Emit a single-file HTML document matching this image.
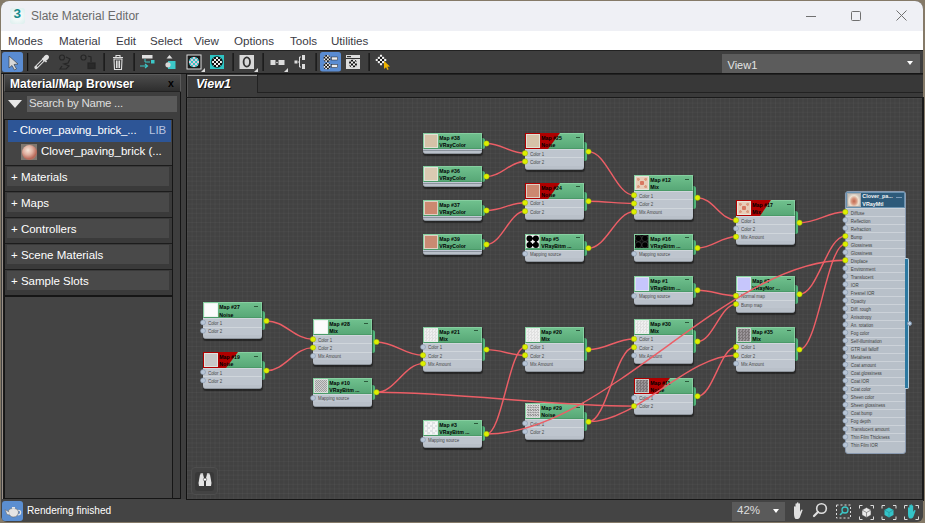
<!DOCTYPE html><html><head><meta charset="utf-8"><style>
*{margin:0;padding:0;box-sizing:border-box}
html,body{width:925px;height:523px;overflow:hidden;background:#857a68;font-family:"Liberation Sans", sans-serif}
.abs{position:absolute}
#win{position:absolute;left:1px;top:1px;width:922px;height:521px;background:#444;border-radius:8px 8px 6px 6px}
#title{position:absolute;left:1px;top:1px;width:922px;height:30px;background:#eff0f5;border-radius:8px 8px 0 0}
#menu{position:absolute;left:1px;top:31px;width:922px;height:19px;background:#fff}
#menu span{position:absolute;top:3.3px;font-size:11.6px;color:#3a3a44}
#tb{position:absolute;left:1px;top:50px;width:922px;height:24px;background:#3e3e3e}
.node{position:absolute}
.node > *{position:absolute}
.nb{left:0;top:0;background:#b9c0c9;border-bottom:0.8px solid #8f969e;border-radius:0 0 3px 3px;box-shadow:0.5px 1.2px 1px rgba(0,0,0,.45)}
.hd{left:0;top:0;height:16px;background:linear-gradient(#6fc08d,#58a877);border:1px solid #86cfa0;border-bottom:1px solid #4a9a68}
.otab{width:4.2px;background:#52b87c;border-radius:0 2.5px 2.5px 0}
.sw{left:1px;top:1px;width:14px;height:14px;border:0.6px solid rgba(230,240,232,.7)}
.t1,.t2{left:16.3px;font-size:5.2px;font-weight:bold;color:#000;white-space:nowrap;line-height:6px}
.t1{top:2.2px} .t2{top:9.3px}
.mini{right:4px;top:3.5px;width:4px;height:1px;background:#2c5a3c}
.row{left:0;height:8.3px;background:#bec5ce;border-top:0.8px solid #d0d6dc}
.row span{position:absolute;left:5px;top:0.6px;font-size:5.1px;color:#484848;white-space:nowrap;line-height:6px;transform:scaleX(0.86);transform-origin:0 0}
</style></head><body>
<div id="win"></div>
<div id="title">
<div class="abs" style="left:9px;top:7px;width:15px;height:16px;background:radial-gradient(circle at 50% 50%,#f2f8f8 40%,#d8eeec 100%);border-radius:3px"></div>
<div class="abs" style="left:12.5px;top:5px;font-size:13.5px;font-weight:bold;color:#168c8c">3</div>
<div class="abs" style="left:30px;top:8px;font-size:12px;color:#6a6a6a">Slate Material Editor</div>
<div class="abs" style="left:805px;top:15px;width:10px;height:1px;background:#707070"></div>
<div class="abs" style="left:850px;top:10px;width:10px;height:10px;border:1px solid #707070;border-radius:1.5px"></div>
<svg class="abs" style="left:895px;top:9px" width="11" height="11"><path d="M0.5,0.5 L10.5,10.5 M10.5,0.5 L0.5,10.5" stroke="#707070" stroke-width="1"/></svg>
</div>
<div id="menu">
<span style="left:7px">Modes</span>
<span style="left:58px">Material</span>
<span style="left:115px">Edit</span>
<span style="left:149px">Select</span>
<span style="left:193px">View</span>
<span style="left:233px">Options</span>
<span style="left:289px">Tools</span>
<span style="left:330px">Utilities</span>
</div>
<div id="tb"></div>
<svg class="abs" style="left:0;top:0" width="925" height="80"><rect x="1" y="50" width="922" height="1" fill="#222"/><rect x="2" y="52" width="21" height="20" rx="2.5" fill="#5a8cd2"/><path d="M9,56 L9,68 L12,65.5 L14.5,70 L16.5,69 L14,64.5 L18,64 Z" fill="#d8d8d8" stroke="#333" stroke-width="0.6"/><rect x="27" y="53" width="1.2" height="18" fill="#111"/><rect x="103.5" y="53" width="1.2" height="18" fill="#111"/><rect x="133.5" y="53" width="1.2" height="18" fill="#111"/><rect x="232.5" y="53" width="1.2" height="18" fill="#111"/><rect x="262.5" y="53" width="1.2" height="18" fill="#111"/><rect x="315.5" y="53" width="1.2" height="18" fill="#111"/><rect x="368.5" y="53" width="1.2" height="18" fill="#111"/><path d="M36,67.5 L43.5,60" stroke="#dcdcdc" stroke-width="3.2" stroke-linecap="round"/><path d="M37,66.5 L43,60.5" stroke="#3a3a3a" stroke-width="1.1"/><ellipse cx="46" cy="57.8" rx="3.3" ry="2.4" transform="rotate(-45 46 57.8)" fill="#e0e0e0"/><path d="M42.5,58 L46.5,62" stroke="#e0e0e0" stroke-width="1.6"/><g fill="none" stroke="#262626" stroke-width="1.2"><circle cx="62" cy="57.5" r="2.5"/><path d="M66,57 L70,59 L68,63 L64,64 L69,66 L66,69 L60,69 L62,66"/></g><g fill="none" stroke="#262626" stroke-width="1.2"><circle cx="83.5" cy="57.5" r="2.5"/><path d="M88,56 L91,57 L91,62"/><rect x="88" y="63" width="7" height="5.5" fill="#2a2a2a"/></g><g fill="none" stroke="#e0e0e0" stroke-width="1.1"><path d="M113,57.5 L123,57.5 M116,57.5 L116,55.5 L120,55.5 L120,57.5"/><path d="M114,59 L114.5,69.5 L121.5,69.5 L122,59 Z M116.5,60.5 L116.5,68 M118,60.5 L118,68 M119.5,60.5 L119.5,68"/></g><rect x="142" y="55" width="10.5" height="3.5" fill="#e0e0e0"/><path d="M145,59 L145,62 L150,62" stroke="#3cc8c8" stroke-width="1" fill="none"/><rect x="151" y="60" width="3.5" height="3.5" fill="#3cc8c8"/><path d="M140,66 L147,66 M145,64 L147.5,66 L145,68" stroke="#3cc8c8" stroke-width="1.2" fill="none"/><polygon points="169.5,55 172.5,58.5 166.5,58.5" fill="#e0e0e0"/><rect x="168" y="61" width="7.5" height="8" fill="#3cc8c8"/><circle cx="168" cy="64.8" r="2.6" fill="#d8d8d8"/><rect x="187" y="55" width="14" height="14" fill="#1a1a1a" stroke="#ddd" stroke-width="1"/><clipPath id="ck1"><circle cx="194" cy="62" r="5.2"/></clipPath><g clip-path="url(#ck1)"><rect x="188.8" y="56.8" width="10.4" height="10.4" fill="#2ec4c4"/><rect x="188.80" y="56.80" width="2.08" height="2.08" fill="#e8c8d8"/><rect x="188.80" y="60.96" width="2.08" height="2.08" fill="#e8c8d8"/><rect x="188.80" y="65.12" width="2.08" height="2.08" fill="#e8c8d8"/><rect x="190.88" y="58.88" width="2.08" height="2.08" fill="#e8c8d8"/><rect x="190.88" y="63.04" width="2.08" height="2.08" fill="#e8c8d8"/><rect x="192.96" y="56.80" width="2.08" height="2.08" fill="#e8c8d8"/><rect x="192.96" y="60.96" width="2.08" height="2.08" fill="#e8c8d8"/><rect x="192.96" y="65.12" width="2.08" height="2.08" fill="#e8c8d8"/><rect x="195.04" y="58.88" width="2.08" height="2.08" fill="#e8c8d8"/><rect x="195.04" y="63.04" width="2.08" height="2.08" fill="#e8c8d8"/><rect x="197.12" y="56.80" width="2.08" height="2.08" fill="#e8c8d8"/><rect x="197.12" y="60.96" width="2.08" height="2.08" fill="#e8c8d8"/><rect x="197.12" y="65.12" width="2.08" height="2.08" fill="#e8c8d8"/></g><polygon points="205,68 205,72 201,72" fill="#ddd"/><rect x="210" y="55" width="14" height="14" fill="#2ec4c4"/><circle cx="217" cy="62" r="5.8" fill="#111"/><clipPath id="ck2"><circle cx="217" cy="62" r="5"/></clipPath><g clip-path="url(#ck2)"><rect x="212" y="57" width="10" height="10" fill="#111"/><rect x="212.00" y="57.00" width="2.00" height="2.00" fill="#f0f0f0"/><rect x="212.00" y="61.00" width="2.00" height="2.00" fill="#f0f0f0"/><rect x="212.00" y="65.00" width="2.00" height="2.00" fill="#f0f0f0"/><rect x="214.00" y="59.00" width="2.00" height="2.00" fill="#f0f0f0"/><rect x="214.00" y="63.00" width="2.00" height="2.00" fill="#f0f0f0"/><rect x="216.00" y="57.00" width="2.00" height="2.00" fill="#f0f0f0"/><rect x="216.00" y="61.00" width="2.00" height="2.00" fill="#f0f0f0"/><rect x="216.00" y="65.00" width="2.00" height="2.00" fill="#f0f0f0"/><rect x="218.00" y="59.00" width="2.00" height="2.00" fill="#f0f0f0"/><rect x="218.00" y="63.00" width="2.00" height="2.00" fill="#f0f0f0"/><rect x="220.00" y="57.00" width="2.00" height="2.00" fill="#f0f0f0"/><rect x="220.00" y="61.00" width="2.00" height="2.00" fill="#f0f0f0"/><rect x="220.00" y="65.00" width="2.00" height="2.00" fill="#f0f0f0"/></g><rect x="239.5" y="55" width="14.5" height="14" fill="#d8d8d8"/><ellipse cx="246.8" cy="62" rx="3.2" ry="4.6" fill="none" stroke="#333" stroke-width="1.8"/><polygon points="258,68 258,72 254,72" fill="#ddd"/><rect x="270.5" y="60" width="5" height="5" fill="#ddd"/><rect x="278.5" y="60" width="6" height="5" fill="#ddd"/><circle cx="277" cy="62.5" r="0.8" fill="#ddd"/><polygon points="288,68 288,72 284,72" fill="#ddd"/><rect x="294.5" y="60.5" width="3" height="3" fill="#ddd"/><path d="M301,57 L299.5,57 L299.5,67 L301,67 M298,62 L299.5,62" stroke="#ddd" stroke-width="1" fill="none"/><rect x="302" y="55" width="3" height="5" fill="#ddd"/><rect x="302" y="64" width="3" height="5" fill="#ddd"/><rect x="320" y="52" width="21" height="19.5" rx="2.5" fill="#5a8cd2"/><clipPath id="ck3"><circle cx="327" cy="58.5" r="3.6"/></clipPath><g clip-path="url(#ck3)"><rect x="323.4" y="54.9" width="7.2" height="7.2" fill="#111"/><rect x="323.40" y="54.90" width="1.80" height="1.80" fill="#f0f0f0"/><rect x="323.40" y="58.50" width="1.80" height="1.80" fill="#f0f0f0"/><rect x="325.20" y="56.70" width="1.80" height="1.80" fill="#f0f0f0"/><rect x="325.20" y="60.30" width="1.80" height="1.80" fill="#f0f0f0"/><rect x="327.00" y="54.90" width="1.80" height="1.80" fill="#f0f0f0"/><rect x="327.00" y="58.50" width="1.80" height="1.80" fill="#f0f0f0"/><rect x="328.80" y="56.70" width="1.80" height="1.80" fill="#f0f0f0"/><rect x="328.80" y="60.30" width="1.80" height="1.80" fill="#f0f0f0"/></g><clipPath id="ck4"><circle cx="327" cy="66" r="3.6"/></clipPath><g clip-path="url(#ck4)"><rect x="323.4" y="62.4" width="7.2" height="7.2" fill="#111"/><rect x="323.40" y="62.40" width="1.80" height="1.80" fill="#f0f0f0"/><rect x="323.40" y="66.00" width="1.80" height="1.80" fill="#f0f0f0"/><rect x="325.20" y="64.20" width="1.80" height="1.80" fill="#f0f0f0"/><rect x="325.20" y="67.80" width="1.80" height="1.80" fill="#f0f0f0"/><rect x="327.00" y="62.40" width="1.80" height="1.80" fill="#f0f0f0"/><rect x="327.00" y="66.00" width="1.80" height="1.80" fill="#f0f0f0"/><rect x="328.80" y="64.20" width="1.80" height="1.80" fill="#f0f0f0"/><rect x="328.80" y="67.80" width="1.80" height="1.80" fill="#f0f0f0"/></g><rect x="331.5" y="57" width="6" height="3" fill="#eee" stroke="#222" stroke-width="0.5"/><rect x="331.5" y="64.5" width="6" height="3" fill="#eee" stroke="#222" stroke-width="0.5"/><rect x="346" y="55" width="14" height="14" fill="#ddd"/><rect x="346" y="58" width="14" height="1" fill="#333"/><rect x="347" y="56" width="4" height="1.2" fill="#333"/><clipPath id="ck5"><circle cx="353" cy="63.5" r="4"/></clipPath><g clip-path="url(#ck5)"><rect x="349" y="59.5" width="8" height="8" fill="#111"/><rect x="349.00" y="59.50" width="2.00" height="2.00" fill="#eee"/><rect x="349.00" y="63.50" width="2.00" height="2.00" fill="#eee"/><rect x="351.00" y="61.50" width="2.00" height="2.00" fill="#eee"/><rect x="351.00" y="65.50" width="2.00" height="2.00" fill="#eee"/><rect x="353.00" y="59.50" width="2.00" height="2.00" fill="#eee"/><rect x="353.00" y="63.50" width="2.00" height="2.00" fill="#eee"/><rect x="355.00" y="61.50" width="2.00" height="2.00" fill="#eee"/><rect x="355.00" y="65.50" width="2.00" height="2.00" fill="#eee"/></g><rect x="379.95" y="54.75" width="2.1" height="2.1" fill="#f4f4f4"/><rect x="377.85" y="56.85" width="2.1" height="2.1" fill="#f4f4f4"/><rect x="379.95" y="56.85" width="2.1" height="2.1" fill="#111"/><rect x="382.05" y="56.85" width="2.1" height="2.1" fill="#f4f4f4"/><rect x="375.75" y="58.95" width="2.1" height="2.1" fill="#f4f4f4"/><rect x="377.85" y="58.95" width="2.1" height="2.1" fill="#111"/><rect x="379.95" y="58.95" width="2.1" height="2.1" fill="#f4f4f4"/><rect x="382.05" y="58.95" width="2.1" height="2.1" fill="#111"/><rect x="384.15" y="58.95" width="2.1" height="2.1" fill="#f4f4f4"/><rect x="377.85" y="61.05" width="2.1" height="2.1" fill="#f4f4f4"/><rect x="379.95" y="61.05" width="2.1" height="2.1" fill="#111"/><rect x="382.05" y="61.05" width="2.1" height="2.1" fill="#f4f4f4"/><rect x="379.95" y="63.15" width="2.1" height="2.1" fill="#f4f4f4"/><path d="M384,61 L384,69 L386,67.3 L387.5,70 L388.7,69.3 L387.3,66.7 L390,66.5 Z" fill="#f0b400"/></svg>
<div class="abs" style="left:2px;top:73px;width:1px;height:426px;background:#9a9088"></div>
<div class="abs" style="left:3px;top:73px;width:178px;height:426px;background:#3e3e3e;border-left:1.5px solid #1a1a1a;border-bottom:1.5px solid #111"></div>
<div class="abs" style="left:180.3px;top:73px;width:5.5px;height:426px;background:#3e3e3e;border-left:1.2px solid #151515"></div>
<div class="abs" style="left:4px;top:74px;width:177px;height:18px;background:linear-gradient(#4c4c4c,#2e2e2e);border:1px solid #5a5a5a;border-bottom:1px solid #222"></div>
<div class="abs" style="left:10px;top:76.7px;font-size:12px;font-weight:bold;color:#fff;text-shadow:0.5px 0.5px 0 #111">Material/Map Browser</div>
<div class="abs" style="left:168px;top:77px;font-size:10.5px;font-weight:bold;color:#000">x</div>
<div class="abs" style="left:27px;top:96px;width:150px;height:16px;background:#5a5a5a"></div>
<div class="abs" style="left:29px;top:97px;font-size:11.5px;color:#dedede;letter-spacing:-0.25px">Search by Name ...</div>
<svg class="abs" style="left:8px;top:99.5px" width="14" height="9"><polygon points="0,0 14,0 7,8" fill="#e8e8e8"/></svg>
<div class="abs" style="left:4px;top:118.5px;width:169px;height:380px;background:#444;border:1.5px solid #161616"></div>
<div class="abs" style="left:8px;top:120px;width:163px;height:22px;background:#2d5596"></div>
<div class="abs" style="left:13px;top:124px;font-size:11.5px;color:#fff;white-space:pre;letter-spacing:-0.15px">- Clover_paving_brick_...</div>
<div class="abs" style="left:149px;top:124px;font-size:11.5px;color:#b8c4e0">LIB</div>
<div class="abs" style="left:21px;top:144px;width:16px;height:16px;background:#807870"></div>
<div class="abs" style="left:21.5px;top:144.5px;width:15px;height:15px;border-radius:50%;background:radial-gradient(circle at 40% 35%,#f6e6d8 0%,#e0b0a0 35%,#b86858 65%,#9a8a80 100%)"></div>
<div class="abs" style="left:41px;top:145px;font-size:11.5px;color:#fff">Clover_paving_brick (...</div>
<div class="abs" style="left:5px;top:165px;width:167px;height:26px;background:#3a3a3a;border-top:1.5px solid #1c1c1c"></div>
<div class="abs" style="left:7px;top:167px;width:162px;height:19px;background:#494949"></div>
<div class="abs" style="left:11px;top:170.5px;font-size:11.5px;color:#fff">+ Materials</div>
<div class="abs" style="left:5px;top:191px;width:167px;height:26px;background:#3a3a3a;border-top:1.5px solid #1c1c1c"></div>
<div class="abs" style="left:7px;top:193px;width:162px;height:19px;background:#494949"></div>
<div class="abs" style="left:11px;top:196.5px;font-size:11.5px;color:#fff">+ Maps</div>
<div class="abs" style="left:5px;top:217px;width:167px;height:26px;background:#3a3a3a;border-top:1.5px solid #1c1c1c"></div>
<div class="abs" style="left:7px;top:219px;width:162px;height:19px;background:#494949"></div>
<div class="abs" style="left:11px;top:222.5px;font-size:11.5px;color:#fff">+ Controllers</div>
<div class="abs" style="left:5px;top:243px;width:167px;height:26px;background:#3a3a3a;border-top:1.5px solid #1c1c1c"></div>
<div class="abs" style="left:7px;top:245px;width:162px;height:19px;background:#494949"></div>
<div class="abs" style="left:11px;top:248.5px;font-size:11.5px;color:#fff">+ Scene Materials</div>
<div class="abs" style="left:5px;top:269px;width:167px;height:26px;background:#3a3a3a;border-top:1.5px solid #1c1c1c"></div>
<div class="abs" style="left:7px;top:271px;width:162px;height:19px;background:#494949"></div>
<div class="abs" style="left:11px;top:274.5px;font-size:11.5px;color:#fff">+ Sample Slots</div>
<div class="abs" style="left:5px;top:295px;width:167px;height:1.5px;background:#161616"></div>
<div class="abs" style="left:185.5px;top:73px;width:737.5px;height:426px;background:#3a3a3a;border-left:1.2px solid #111"></div>
<div class="abs" style="left:1px;top:72.5px;width:922px;height:1.5px;background:#151515"></div>
<div class="abs" style="left:257px;top:74px;width:666px;height:19px;background:#383838;border:1.5px solid #222;border-right:none"></div>
<div class="abs" style="left:187px;top:75px;width:70px;height:22px;background:#3c3c3c;border-top:1px solid #9a9a9a;border-left:1px solid #555"></div>
<div class="abs" style="left:196px;top:77px;font-size:12.5px;font-weight:bold;font-style:italic;color:#fff;text-shadow:1px 1px 0 #111">View1</div>
<div class="abs" style="left:186px;top:96.5px;width:737px;height:1.5px;background:#1a1a1a"></div>
<div class="abs" style="left:186.7px;top:98px;width:735.3px;height:400.5px;background-color:#424242;background-image:linear-gradient(90deg,rgba(255,255,255,.03) 1px,transparent 1px),linear-gradient(rgba(255,255,255,.03) 1px,transparent 1px);background-size:4.6px 4.6px"></div>
<div class="abs" style="left:922px;top:96.5px;width:1.5px;height:404px;background:#1a1a1a"></div>
<div class="abs" style="left:186px;top:498.5px;width:737px;height:1.5px;background:#151515"></div>
<div class="node" style="left:423px;top:133px;width:59px;height:21.0px"><div class="otab" style="left:58px;top:5.0px;height:11.0px"></div><div class="nb" style="width:59px;height:21.0px"></div><div class="hd" style="width:59px"></div><div class="sw" style="background:#d6c2a8"></div><div class="t1">Map #38</div><div class="t2">VRayColor</div><div style="left:0;top:16px;width:59px;height:2.4px;background:#c3c8d6;border-bottom:0.6px solid #8a929c"></div></div>
<div class="node" style="left:423px;top:166px;width:59px;height:21.0px"><div class="otab" style="left:58px;top:5.0px;height:11.0px"></div><div class="nb" style="width:59px;height:21.0px"></div><div class="hd" style="width:59px"></div><div class="sw" style="background:#dacab2"></div><div class="t1">Map #36</div><div class="t2">VRayColor</div><div style="left:0;top:16px;width:59px;height:2.4px;background:#c3c8d6;border-bottom:0.6px solid #8a929c"></div></div>
<div class="node" style="left:423px;top:200px;width:59px;height:21.0px"><div class="otab" style="left:58px;top:5.0px;height:11.0px"></div><div class="nb" style="width:59px;height:21.0px"></div><div class="hd" style="width:59px"></div><div class="sw" style="background:#cc8870"></div><div class="t1">Map #37</div><div class="t2">VRayColor</div><div style="left:0;top:16px;width:59px;height:2.4px;background:#c3c8d6;border-bottom:0.6px solid #8a929c"></div></div>
<div class="node" style="left:423px;top:234px;width:59px;height:21.0px"><div class="otab" style="left:58px;top:5.0px;height:11.0px"></div><div class="nb" style="width:59px;height:21.0px"></div><div class="hd" style="width:59px"></div><div class="sw" style="background:#c98a72"></div><div class="t1">Map #39</div><div class="t2">VRayColor</div><div style="left:0;top:16px;width:59px;height:2.4px;background:#c3c8d6;border-bottom:0.6px solid #8a929c"></div></div>
<div class="node" style="left:525px;top:133px;width:59px;height:37.1px"><div class="otab" style="left:58px;top:9.1px;height:19.0px"></div><div class="nb" style="width:59px;height:37.1px"></div><div class="hd" style="width:59px"></div><svg class="red" width="59" height="16" style="left:0;top:0"><polygon points="0,0 35,0 23,16 0,16" fill="#b00000"/></svg><div class="sw" style="background:#d6c2a8"></div><div class="t1">Map #25</div><div class="t2">Noise</div><div class="mini"></div><div class="row" style="top:16.0px;width:59px"><span>Color 1</span></div><div class="row" style="top:24.3px;width:59px"><span>Color 2</span></div></div>
<div class="node" style="left:525px;top:182.7px;width:59px;height:37.1px"><div class="otab" style="left:58px;top:9.1px;height:19.0px"></div><div class="nb" style="width:59px;height:37.1px"></div><div class="hd" style="width:59px"></div><svg class="red" width="59" height="16" style="left:0;top:0"><polygon points="0,0 35,0 23,16 0,16" fill="#b00000"/></svg><div class="sw" style="background:#cc8870"></div><div class="t1">Map #24</div><div class="t2">Noise</div><div class="mini"></div><div class="row" style="top:16.0px;width:59px"><span>Color 1</span></div><div class="row" style="top:24.3px;width:59px"><span>Color 2</span></div></div>
<div class="node" style="left:525px;top:233.7px;width:59px;height:28.8px"><div class="otab" style="left:58px;top:6.9px;height:15.0px"></div><div class="nb" style="width:59px;height:28.8px"></div><div class="hd" style="width:59px"></div><svg style="position:absolute;left:1.3px;top:1.3px" width="13.4" height="13.4"><rect width="13.4" height="13.4" fill="#f2f2f2"/><g fill="#000"><circle cx="3.5" cy="3.5" r="3.0"/><circle cx="9.9" cy="3.5" r="3.0"/><circle cx="3.5" cy="9.9" r="3.0"/><circle cx="9.9" cy="9.9" r="3.0"/><rect x="3.5" y="2.6" width="6.4" height="1.8"/><rect x="3.5" y="9" width="6.4" height="1.8"/><rect x="2.6" y="3.5" width="1.8" height="6.4"/><rect x="9" y="3.5" width="1.8" height="6.4"/></g></svg><div class="t1">Map #5</div><div class="t2">VRayBitm ...</div><div class="mini"></div><div class="row" style="top:16.0px;width:59px"><span>Mapping source</span></div></div>
<div class="node" style="left:634px;top:175px;width:59px;height:45.4px"><div class="otab" style="left:58px;top:11.2px;height:23.0px"></div><div class="nb" style="width:59px;height:45.4px"></div><div class="hd" style="width:59px"></div><div class="sw" style="background:#e8cdb8;background-image:radial-gradient(circle at 50% 50%,#d87860 0 2px,transparent 2.5px),radial-gradient(circle at 20% 20%,#dc9a80 0 1.2px,transparent 1.6px),radial-gradient(circle at 80% 20%,#dc9a80 0 1.2px,transparent 1.6px),radial-gradient(circle at 20% 80%,#dc9a80 0 1.2px,transparent 1.6px),radial-gradient(circle at 80% 80%,#dc9a80 0 1.2px,transparent 1.6px)"></div><div class="t1">Map #12</div><div class="t2">Mix</div><div class="mini"></div><div class="row" style="top:16.0px;width:59px"><span>Color 1</span></div><div class="row" style="top:24.3px;width:59px"><span>Color 2</span></div><div class="row" style="top:32.6px;width:59px"><span>Mix Amount</span></div></div>
<div class="node" style="left:634px;top:233.6px;width:59px;height:28.8px"><div class="otab" style="left:58px;top:6.9px;height:15.0px"></div><div class="nb" style="width:59px;height:28.8px"></div><div class="hd" style="width:59px"></div><svg style="position:absolute;left:1.3px;top:1.3px" width="13.4" height="13.4"><rect width="13.4" height="13.4" fill="#0c0c0c"/><g fill="#000" stroke="#555" stroke-width="0.5"><circle cx="3.4" cy="3.4" r="3.1"/><circle cx="10" cy="3.4" r="3.1"/><circle cx="3.4" cy="10" r="3.1"/><circle cx="10" cy="10" r="3.1"/></g></svg><div class="t1">Map #16</div><div class="t2">VRayBitm ...</div><div class="mini"></div><div class="row" style="top:16.0px;width:59px"><span>Mapping source</span></div></div>
<div class="node" style="left:634px;top:275.8px;width:59px;height:28.8px"><div class="otab" style="left:58px;top:6.9px;height:15.0px"></div><div class="nb" style="width:59px;height:28.8px"></div><div class="hd" style="width:59px"></div><div class="sw" style="background:#c6c6fc"></div><div class="t1">Map #1</div><div class="t2">VRayBitm ...</div><div class="mini"></div><div class="row" style="top:16.0px;width:59px"><span>Mapping source</span></div></div>
<div class="node" style="left:634px;top:318.8px;width:59px;height:45.4px"><div class="otab" style="left:58px;top:11.2px;height:23.0px"></div><div class="nb" style="width:59px;height:45.4px"></div><div class="hd" style="width:59px"></div><div class="sw" style="background:#e8e8e8;background-image:repeating-conic-gradient(#e0e0e0 0 25%,#f0f0f0 0 50%);background-size:3px 3px"></div><div class="t1">Map #30</div><div class="t2">Mix</div><div class="mini"></div><div class="row" style="top:16.0px;width:59px"><span>Color 1</span></div><div class="row" style="top:24.3px;width:59px"><span>Color 2</span></div><div class="row" style="top:32.6px;width:59px"><span>Mix Amount</span></div></div>
<div class="node" style="left:634px;top:377.6px;width:59px;height:37.1px"><div class="otab" style="left:58px;top:9.1px;height:19.0px"></div><div class="nb" style="width:59px;height:37.1px"></div><div class="hd" style="width:59px"></div><svg class="red" width="59" height="16" style="left:0;top:0"><polygon points="0,0 36,0 24,16 0,16" fill="#b00000"/></svg><div class="sw" style="background:#8a8488;background-image:repeating-conic-gradient(#7c7678 0 25%,#9a9498 0 50%);background-size:3px 3px"></div><div class="t1">Map #11</div><div class="t2">Noise</div><div class="mini"></div><div class="row" style="top:16.0px;width:59px"><span>Color 1</span></div><div class="row" style="top:24.3px;width:59px"><span>Color 2</span></div></div>
<div class="node" style="left:736px;top:200px;width:59px;height:45.4px"><div class="otab" style="left:58px;top:11.2px;height:23.0px"></div><div class="nb" style="width:59px;height:45.4px"></div><div class="hd" style="width:59px"></div><svg class="red" width="59" height="16" style="left:0;top:0"><polygon points="0,0 35,0 24,16 0,16" fill="#b00000"/></svg><div class="sw" style="background:#e8cdb8;background-image:radial-gradient(circle at 50% 50%,#d87860 0 2px,transparent 2.5px),radial-gradient(circle at 20% 20%,#dc9a80 0 1.2px,transparent 1.6px),radial-gradient(circle at 80% 20%,#dc9a80 0 1.2px,transparent 1.6px),radial-gradient(circle at 20% 80%,#dc9a80 0 1.2px,transparent 1.6px),radial-gradient(circle at 80% 80%,#dc9a80 0 1.2px,transparent 1.6px)"></div><div class="t1">Map #17</div><div class="t2">Mix</div><div class="mini"></div><div class="row" style="top:16.0px;width:59px"><span>Color 1</span></div><div class="row" style="top:24.3px;width:59px"><span>Color 2</span></div><div class="row" style="top:32.6px;width:59px"><span>Mix Amount</span></div></div>
<div class="node" style="left:736px;top:275.7px;width:59px;height:37.1px"><div class="otab" style="left:58px;top:9.1px;height:19.0px"></div><div class="nb" style="width:59px;height:37.1px"></div><div class="hd" style="width:59px"></div><div class="sw" style="background:#c6c6fc"></div><div class="t1">Map #7</div><div class="t2">VRayNor ...</div><div class="mini"></div><div class="row" style="top:16.0px;width:59px"><span>Normal map</span></div><div class="row" style="top:24.3px;width:59px"><span>Bump map</span></div></div>
<div class="node" style="left:736px;top:326.9px;width:59px;height:45.4px"><div class="otab" style="left:58px;top:11.2px;height:23.0px"></div><div class="nb" style="width:59px;height:45.4px"></div><div class="hd" style="width:59px"></div><div class="sw" style="background:#8a8488;background-image:repeating-conic-gradient(#7c7678 0 25%,#9a9498 0 50%);background-size:3px 3px"></div><div class="t1">Map #35</div><div class="t2">Mix</div><div class="mini"></div><div class="row" style="top:16.0px;width:59px"><span>Color 1</span></div><div class="row" style="top:24.3px;width:59px"><span>Color 2</span></div><div class="row" style="top:32.6px;width:59px"><span>Mix Amount</span></div></div>
<div class="node" style="left:203px;top:302.3px;width:59px;height:37.1px"><div class="otab" style="left:58px;top:9.1px;height:19.0px"></div><div class="nb" style="width:59px;height:37.1px"></div><div class="hd" style="width:59px"></div><div class="sw" style="background:#fbfbfb"></div><div class="t1">Map #27</div><div class="t2">Noise</div><div class="mini"></div><div class="row" style="top:16.0px;width:59px"><span>Color 1</span></div><div class="row" style="top:24.3px;width:59px"><span>Color 2</span></div></div>
<div class="node" style="left:203px;top:352px;width:59px;height:37.1px"><div class="otab" style="left:58px;top:9.1px;height:19.0px"></div><div class="nb" style="width:59px;height:37.1px"></div><div class="hd" style="width:59px"></div><svg class="red" width="59" height="16" style="left:0;top:0"><polygon points="0,0 35,0 23,16 0,16" fill="#b00000"/></svg><div class="sw" style="background:#c8c8c8"></div><div class="t1">Map #19</div><div class="t2">Noise</div><div class="mini"></div><div class="row" style="top:16.0px;width:59px"><span>Color 1</span></div><div class="row" style="top:24.3px;width:59px"><span>Color 2</span></div></div>
<div class="node" style="left:313px;top:319.2px;width:59px;height:45.4px"><div class="otab" style="left:58px;top:11.2px;height:23.0px"></div><div class="nb" style="width:59px;height:45.4px"></div><div class="hd" style="width:59px"></div><div class="sw" style="background:#fbfbfb"></div><div class="t1">Map #28</div><div class="t2">Mix</div><div class="mini"></div><div class="row" style="top:16.0px;width:59px"><span>Color 1</span></div><div class="row" style="top:24.3px;width:59px"><span>Color 2</span></div><div class="row" style="top:32.6px;width:59px"><span>Mix Amount</span></div></div>
<div class="node" style="left:313px;top:377.9px;width:59px;height:28.8px"><div class="otab" style="left:58px;top:6.9px;height:15.0px"></div><div class="nb" style="width:59px;height:28.8px"></div><div class="hd" style="width:59px"></div><div class="sw" style="background:#b8b8b8;background-image:repeating-conic-gradient(#a0a0a0 0 25%,#d0d0d0 0 50%);background-size:2px 2px"></div><div class="t1">Map #10</div><div class="t2">VRayBitm ...</div><div class="mini"></div><div class="row" style="top:16.0px;width:59px"><span>Mapping source</span></div></div>
<div class="node" style="left:423px;top:326.9px;width:59px;height:45.4px"><div class="otab" style="left:58px;top:11.2px;height:23.0px"></div><div class="nb" style="width:59px;height:45.4px"></div><div class="hd" style="width:59px"></div><div class="sw" style="background:#e8e8e8;background-image:repeating-conic-gradient(#e0e0e0 0 25%,#f0f0f0 0 50%);background-size:3px 3px"></div><div class="t1">Map #21</div><div class="t2">Mix</div><div class="mini"></div><div class="row" style="top:16.0px;width:59px"><span>Color 1</span></div><div class="row" style="top:24.3px;width:59px"><span>Color 2</span></div><div class="row" style="top:32.6px;width:59px"><span>Mix Amount</span></div></div>
<div class="node" style="left:423px;top:419.6px;width:59px;height:28.8px"><div class="otab" style="left:58px;top:6.9px;height:15.0px"></div><div class="nb" style="width:59px;height:28.8px"></div><div class="hd" style="width:59px"></div><div class="sw" style="background:#eef0f0;background-image:repeating-conic-gradient(#dfe2e4 0 25%,#f6f6f6 0 50%);background-size:5px 5px"></div><div class="t1">Map #3</div><div class="t2">VRayBitm ...</div><div class="mini"></div><div class="row" style="top:16.0px;width:59px"><span>Mapping source</span></div></div>
<div class="node" style="left:525px;top:326.9px;width:59px;height:45.4px"><div class="otab" style="left:58px;top:11.2px;height:23.0px"></div><div class="nb" style="width:59px;height:45.4px"></div><div class="hd" style="width:59px"></div><div class="sw" style="background:#e8e8e8;background-image:repeating-conic-gradient(#e0e0e0 0 25%,#f0f0f0 0 50%);background-size:3px 3px"></div><div class="t1">Map #20</div><div class="t2">Mix</div><div class="mini"></div><div class="row" style="top:16.0px;width:59px"><span>Color 1</span></div><div class="row" style="top:24.3px;width:59px"><span>Color 2</span></div><div class="row" style="top:32.6px;width:59px"><span>Mix Amount</span></div></div>
<div class="node" style="left:525px;top:403.2px;width:59px;height:37.1px"><div class="otab" style="left:58px;top:9.1px;height:19.0px"></div><div class="nb" style="width:59px;height:37.1px"></div><div class="hd" style="width:59px"></div><div class="sw" style="background:#b8b8b8;background-image:repeating-conic-gradient(#8a8a8a 0 25%,#dedede 0 50%);background-size:2.5px 2.5px"></div><div class="t1">Map #29</div><div class="t2">Noise</div><div class="mini"></div><div class="row" style="top:16.0px;width:59px"><span>Color 1</span></div><div class="row" style="top:24.3px;width:59px"><span>Color 2</span></div></div>
<div class="abs" style="left:845.3px;top:191.2px;width:60.700000000000045px;height:263px;background:#b8c0c9;border:1px solid #8a9ab0;border-radius:3px"></div>
<div class="abs" style="left:846.3px;top:192.2px;width:58.700000000000045px;height:16px;background:#2d5a7a;border:1px solid #6a92b0"></div>
<div class="abs" style="left:847.3px;top:193.2px;width:14px;height:14px;border:0.6px solid #aaa;background:radial-gradient(ellipse at 50% 60%,#c06850 0,#d89880 30%,#ece0d0 55%,#c8c0b8 80%)"></div>
<div class="abs" style="left:862.3px;top:193.2px;font-size:5.4px;font-weight:bold;color:#f4f4f4;line-height:6px;white-space:nowrap">Clover_pa...</div>
<div class="abs" style="left:862.3px;top:200.79999999999998px;font-size:5.4px;font-weight:bold;color:#f4f4f4;line-height:6px">VRayMtl</div>
<div class="abs" style="left:846.3px;top:208.0px;width:58.700000000000045px;height:8.03px;border-top:0.8px solid #ccd2d9"></div>
<div class="abs" style="left:850.3px;top:209.5px;font-size:5.1px;color:#404040;line-height:6px;white-space:nowrap;transform:scaleX(0.86);transform-origin:0 0;padding-left:1px">Diffuse</div>
<div class="abs" style="left:846.3px;top:216.0px;width:58.700000000000045px;height:8.03px;border-top:0.8px solid #ccd2d9"></div>
<div class="abs" style="left:850.3px;top:217.5px;font-size:5.1px;color:#404040;line-height:6px;white-space:nowrap;transform:scaleX(0.86);transform-origin:0 0;padding-left:1px">Reflection</div>
<div class="abs" style="left:846.3px;top:224.1px;width:58.700000000000045px;height:8.03px;border-top:0.8px solid #ccd2d9"></div>
<div class="abs" style="left:850.3px;top:225.6px;font-size:5.1px;color:#404040;line-height:6px;white-space:nowrap;transform:scaleX(0.86);transform-origin:0 0;padding-left:1px">Refraction</div>
<div class="abs" style="left:846.3px;top:232.1px;width:58.700000000000045px;height:8.03px;border-top:0.8px solid #ccd2d9"></div>
<div class="abs" style="left:850.3px;top:233.6px;font-size:5.1px;color:#404040;line-height:6px;white-space:nowrap;transform:scaleX(0.86);transform-origin:0 0;padding-left:1px">Bump</div>
<div class="abs" style="left:846.3px;top:240.1px;width:58.700000000000045px;height:8.03px;border-top:0.8px solid #ccd2d9"></div>
<div class="abs" style="left:850.3px;top:241.6px;font-size:5.1px;color:#404040;line-height:6px;white-space:nowrap;transform:scaleX(0.86);transform-origin:0 0;padding-left:1px">Glossiness</div>
<div class="abs" style="left:846.3px;top:248.2px;width:58.700000000000045px;height:8.03px;border-top:0.8px solid #ccd2d9"></div>
<div class="abs" style="left:850.3px;top:249.7px;font-size:5.1px;color:#404040;line-height:6px;white-space:nowrap;transform:scaleX(0.86);transform-origin:0 0;padding-left:1px">Glossiness</div>
<div class="abs" style="left:846.3px;top:256.2px;width:58.700000000000045px;height:8.03px;border-top:0.8px solid #ccd2d9"></div>
<div class="abs" style="left:850.3px;top:257.7px;font-size:5.1px;color:#404040;line-height:6px;white-space:nowrap;transform:scaleX(0.86);transform-origin:0 0;padding-left:1px">Displace</div>
<div class="abs" style="left:846.3px;top:264.2px;width:58.700000000000045px;height:8.03px;border-top:0.8px solid #ccd2d9"></div>
<div class="abs" style="left:850.3px;top:265.7px;font-size:5.1px;color:#404040;line-height:6px;white-space:nowrap;transform:scaleX(0.86);transform-origin:0 0;padding-left:1px">Environment</div>
<div class="abs" style="left:846.3px;top:272.2px;width:58.700000000000045px;height:8.03px;border-top:0.8px solid #ccd2d9"></div>
<div class="abs" style="left:850.3px;top:273.7px;font-size:5.1px;color:#404040;line-height:6px;white-space:nowrap;transform:scaleX(0.86);transform-origin:0 0;padding-left:1px">Translucent</div>
<div class="abs" style="left:846.3px;top:280.3px;width:58.700000000000045px;height:8.03px;border-top:0.8px solid #ccd2d9"></div>
<div class="abs" style="left:850.3px;top:281.8px;font-size:5.1px;color:#404040;line-height:6px;white-space:nowrap;transform:scaleX(0.86);transform-origin:0 0;padding-left:1px">IOR</div>
<div class="abs" style="left:846.3px;top:288.3px;width:58.700000000000045px;height:8.03px;border-top:0.8px solid #ccd2d9"></div>
<div class="abs" style="left:850.3px;top:289.8px;font-size:5.1px;color:#404040;line-height:6px;white-space:nowrap;transform:scaleX(0.86);transform-origin:0 0;padding-left:1px">Fresnel IOR</div>
<div class="abs" style="left:846.3px;top:296.3px;width:58.700000000000045px;height:8.03px;border-top:0.8px solid #ccd2d9"></div>
<div class="abs" style="left:850.3px;top:297.8px;font-size:5.1px;color:#404040;line-height:6px;white-space:nowrap;transform:scaleX(0.86);transform-origin:0 0;padding-left:1px">Opacity</div>
<div class="abs" style="left:846.3px;top:304.4px;width:58.700000000000045px;height:8.03px;border-top:0.8px solid #ccd2d9"></div>
<div class="abs" style="left:850.3px;top:305.9px;font-size:5.1px;color:#404040;line-height:6px;white-space:nowrap;transform:scaleX(0.86);transform-origin:0 0;padding-left:1px">Diff. rough</div>
<div class="abs" style="left:846.3px;top:312.4px;width:58.700000000000045px;height:8.03px;border-top:0.8px solid #ccd2d9"></div>
<div class="abs" style="left:850.3px;top:313.9px;font-size:5.1px;color:#404040;line-height:6px;white-space:nowrap;transform:scaleX(0.86);transform-origin:0 0;padding-left:1px">Anisotropy</div>
<div class="abs" style="left:846.3px;top:320.4px;width:58.700000000000045px;height:8.03px;border-top:0.8px solid #ccd2d9"></div>
<div class="abs" style="left:850.3px;top:321.9px;font-size:5.1px;color:#404040;line-height:6px;white-space:nowrap;transform:scaleX(0.86);transform-origin:0 0;padding-left:1px">An. rotation</div>
<div class="abs" style="left:846.3px;top:328.4px;width:58.700000000000045px;height:8.03px;border-top:0.8px solid #ccd2d9"></div>
<div class="abs" style="left:850.3px;top:329.9px;font-size:5.1px;color:#404040;line-height:6px;white-space:nowrap;transform:scaleX(0.86);transform-origin:0 0;padding-left:1px">Fog color</div>
<div class="abs" style="left:846.3px;top:336.5px;width:58.700000000000045px;height:8.03px;border-top:0.8px solid #ccd2d9"></div>
<div class="abs" style="left:850.3px;top:338.0px;font-size:5.1px;color:#404040;line-height:6px;white-space:nowrap;transform:scaleX(0.86);transform-origin:0 0;padding-left:1px">Self-illumination</div>
<div class="abs" style="left:846.3px;top:344.5px;width:58.700000000000045px;height:8.03px;border-top:0.8px solid #ccd2d9"></div>
<div class="abs" style="left:850.3px;top:346.0px;font-size:5.1px;color:#404040;line-height:6px;white-space:nowrap;transform:scaleX(0.86);transform-origin:0 0;padding-left:1px">GTR tail falloff</div>
<div class="abs" style="left:846.3px;top:352.5px;width:58.700000000000045px;height:8.03px;border-top:0.8px solid #ccd2d9"></div>
<div class="abs" style="left:850.3px;top:354.0px;font-size:5.1px;color:#404040;line-height:6px;white-space:nowrap;transform:scaleX(0.86);transform-origin:0 0;padding-left:1px">Metalness</div>
<div class="abs" style="left:846.3px;top:360.6px;width:58.700000000000045px;height:8.03px;border-top:0.8px solid #ccd2d9"></div>
<div class="abs" style="left:850.3px;top:362.1px;font-size:5.1px;color:#404040;line-height:6px;white-space:nowrap;transform:scaleX(0.86);transform-origin:0 0;padding-left:1px">Coat amount</div>
<div class="abs" style="left:846.3px;top:368.6px;width:58.700000000000045px;height:8.03px;border-top:0.8px solid #ccd2d9"></div>
<div class="abs" style="left:850.3px;top:370.1px;font-size:5.1px;color:#404040;line-height:6px;white-space:nowrap;transform:scaleX(0.86);transform-origin:0 0;padding-left:1px">Coat glossiness</div>
<div class="abs" style="left:846.3px;top:376.6px;width:58.700000000000045px;height:8.03px;border-top:0.8px solid #ccd2d9"></div>
<div class="abs" style="left:850.3px;top:378.1px;font-size:5.1px;color:#404040;line-height:6px;white-space:nowrap;transform:scaleX(0.86);transform-origin:0 0;padding-left:1px">Coat IOR</div>
<div class="abs" style="left:846.3px;top:384.7px;width:58.700000000000045px;height:8.03px;border-top:0.8px solid #ccd2d9"></div>
<div class="abs" style="left:850.3px;top:386.2px;font-size:5.1px;color:#404040;line-height:6px;white-space:nowrap;transform:scaleX(0.86);transform-origin:0 0;padding-left:1px">Coat color</div>
<div class="abs" style="left:846.3px;top:392.7px;width:58.700000000000045px;height:8.03px;border-top:0.8px solid #ccd2d9"></div>
<div class="abs" style="left:850.3px;top:394.2px;font-size:5.1px;color:#404040;line-height:6px;white-space:nowrap;transform:scaleX(0.86);transform-origin:0 0;padding-left:1px">Sheen color</div>
<div class="abs" style="left:846.3px;top:400.7px;width:58.700000000000045px;height:8.03px;border-top:0.8px solid #ccd2d9"></div>
<div class="abs" style="left:850.3px;top:402.2px;font-size:5.1px;color:#404040;line-height:6px;white-space:nowrap;transform:scaleX(0.86);transform-origin:0 0;padding-left:1px">Sheen glossiness</div>
<div class="abs" style="left:846.3px;top:408.8px;width:58.700000000000045px;height:8.03px;border-top:0.8px solid #ccd2d9"></div>
<div class="abs" style="left:850.3px;top:410.2px;font-size:5.1px;color:#404040;line-height:6px;white-space:nowrap;transform:scaleX(0.86);transform-origin:0 0;padding-left:1px">Coat bump</div>
<div class="abs" style="left:846.3px;top:416.8px;width:58.700000000000045px;height:8.03px;border-top:0.8px solid #ccd2d9"></div>
<div class="abs" style="left:850.3px;top:418.3px;font-size:5.1px;color:#404040;line-height:6px;white-space:nowrap;transform:scaleX(0.86);transform-origin:0 0;padding-left:1px">Fog depth</div>
<div class="abs" style="left:846.3px;top:424.8px;width:58.700000000000045px;height:8.03px;border-top:0.8px solid #ccd2d9"></div>
<div class="abs" style="left:850.3px;top:426.3px;font-size:5.1px;color:#404040;line-height:6px;white-space:nowrap;transform:scaleX(0.86);transform-origin:0 0;padding-left:1px">Translucent amount</div>
<div class="abs" style="left:846.3px;top:432.8px;width:58.700000000000045px;height:8.03px;border-top:0.8px solid #ccd2d9"></div>
<div class="abs" style="left:850.3px;top:434.3px;font-size:5.1px;color:#404040;line-height:6px;white-space:nowrap;transform:scaleX(0.86);transform-origin:0 0;padding-left:1px">Thin Film Thickness</div>
<div class="abs" style="left:846.3px;top:440.9px;width:58.700000000000045px;height:8.03px;border-top:0.8px solid #ccd2d9"></div>
<div class="abs" style="left:850.3px;top:442.4px;font-size:5.1px;color:#404040;line-height:6px;white-space:nowrap;transform:scaleX(0.86);transform-origin:0 0;padding-left:1px">Thin Film IOR</div>
<div class="abs" style="left:896px;top:196.5px;width:6px;height:1px;background:#7a9ab8"></div>
<div class="abs" style="left:905.3px;top:257.5px;width:4px;height:131.5px;background:#2c78a0;border:0.8px solid #b8d0e0;border-left:none;border-radius:0 2px 2px 0"></div>
<div class="abs" style="left:906.6px;top:320.5px;width:5.4px;height:5.4px;border-radius:50%;background:#c4d6e8;border:0.6px solid #7a90a8"></div>
<svg class="abs" style="left:0;top:0" width="925" height="523"><path d="M486.5,143.5 C501.9,143.5 509.6,153.2 525.0,153.2" fill="none" stroke="#ec5e66" stroke-width="1.45"/><path d="M486.5,176.5 C501.9,176.5 509.6,161.5 525.0,161.5" fill="none" stroke="#ec5e66" stroke-width="1.45"/><path d="M486.5,210.5 C501.9,210.5 509.6,202.8 525.0,202.8" fill="none" stroke="#ec5e66" stroke-width="1.45"/><path d="M486.5,244.5 C501.9,244.5 509.6,211.2 525.0,211.2" fill="none" stroke="#ec5e66" stroke-width="1.45"/><path d="M588.5,151.6 C606.7,151.6 615.8,195.2 634.0,195.2" fill="none" stroke="#ec5e66" stroke-width="1.45"/><path d="M588.5,201.2 C606.7,201.2 615.8,203.5 634.0,203.5" fill="none" stroke="#ec5e66" stroke-width="1.45"/><path d="M588.5,248.1 C606.7,248.1 615.8,211.8 634.0,211.8" fill="none" stroke="#ec5e66" stroke-width="1.45"/><path d="M697.5,197.7 C712.9,197.7 720.6,220.2 736.0,220.2" fill="none" stroke="#ec5e66" stroke-width="1.45"/><path d="M697.5,248.0 C712.9,248.0 720.6,236.8 736.0,236.8" fill="none" stroke="#ec5e66" stroke-width="1.45"/><path d="M799.5,222.7 C817.8,222.7 827.0,212.0 845.3,212.0" fill="none" stroke="#ec5e66" stroke-width="1.45"/><path d="M697.5,290.2 C712.9,290.2 720.6,295.8 736.0,295.8" fill="none" stroke="#ec5e66" stroke-width="1.45"/><path d="M697.5,341.5 C712.9,341.5 720.6,304.1 736.0,304.1" fill="none" stroke="#ec5e66" stroke-width="1.45"/><path d="M799.5,294.2 C817.8,294.2 827.0,236.1 845.3,236.1" fill="none" stroke="#ec5e66" stroke-width="1.45"/><path d="M799.5,349.6 C817.8,349.6 827.0,244.1 845.3,244.1" fill="none" stroke="#ec5e66" stroke-width="1.45"/><path d="M486.5,434.0 C604.9,434.0 726.9,260.2 845.3,260.2" fill="none" stroke="#ec5e66" stroke-width="1.45"/><path d="M266.5,320.9 C285.1,320.9 294.4,339.3 313.0,339.3" fill="none" stroke="#ec5e66" stroke-width="1.45"/><path d="M266.5,370.6 C285.1,370.6 294.4,347.6 313.0,347.6" fill="none" stroke="#ec5e66" stroke-width="1.45"/><path d="M376.5,341.9 C395.1,341.9 404.4,355.3 423.0,355.3" fill="none" stroke="#ec5e66" stroke-width="1.45"/><path d="M376.5,392.3 C395.1,392.3 404.4,363.6 423.0,363.6" fill="none" stroke="#ec5e66" stroke-width="1.45"/><path d="M376.5,392.3 C461.5,392.3 549.0,406.1 634.0,406.1" fill="none" stroke="#ec5e66" stroke-width="1.45"/><path d="M486.5,349.6 C501.9,349.6 509.6,355.3 525.0,355.3" fill="none" stroke="#ec5e66" stroke-width="1.45"/><path d="M486.5,434.0 C501.9,434.0 509.6,347.0 525.0,347.0" fill="none" stroke="#ec5e66" stroke-width="1.45"/><path d="M588.5,349.6 C606.7,349.6 615.8,338.9 634.0,338.9" fill="none" stroke="#ec5e66" stroke-width="1.45"/><path d="M588.5,421.8 C606.7,421.8 615.8,347.2 634.0,347.2" fill="none" stroke="#ec5e66" stroke-width="1.45"/><path d="M588.5,421.8 C637.2,421.8 687.3,355.3 736.0,355.3" fill="none" stroke="#ec5e66" stroke-width="1.45"/><path d="M697.5,396.2 C712.9,396.2 720.6,347.0 736.0,347.0" fill="none" stroke="#ec5e66" stroke-width="1.45"/><circle cx="486.5" cy="143.5" r="2.7" fill="#dcf000" stroke="#8a9a10" stroke-width="0.4"/><circle cx="486.5" cy="176.5" r="2.7" fill="#dcf000" stroke="#8a9a10" stroke-width="0.4"/><circle cx="486.5" cy="210.5" r="2.7" fill="#dcf000" stroke="#8a9a10" stroke-width="0.4"/><circle cx="486.5" cy="244.5" r="2.7" fill="#dcf000" stroke="#8a9a10" stroke-width="0.4"/><circle cx="588.5" cy="151.6" r="2.7" fill="#dcf000" stroke="#8a9a10" stroke-width="0.4"/><circle cx="525.0" cy="153.2" r="2.7" fill="#dcf000" stroke="#8a9a10" stroke-width="0.4"/><circle cx="525.0" cy="161.5" r="2.7" fill="#dcf000" stroke="#8a9a10" stroke-width="0.4"/><circle cx="588.5" cy="201.2" r="2.7" fill="#dcf000" stroke="#8a9a10" stroke-width="0.4"/><circle cx="525.0" cy="202.8" r="2.7" fill="#dcf000" stroke="#8a9a10" stroke-width="0.4"/><circle cx="525.0" cy="211.2" r="2.7" fill="#dcf000" stroke="#8a9a10" stroke-width="0.4"/><circle cx="588.5" cy="248.1" r="2.7" fill="#dcf000" stroke="#8a9a10" stroke-width="0.4"/><circle cx="525.0" cy="253.8" r="2.5" fill="#b7c5d6" stroke="#7f8ea5" stroke-width="0.5"/><circle cx="697.5" cy="197.7" r="2.7" fill="#dcf000" stroke="#8a9a10" stroke-width="0.4"/><circle cx="634.0" cy="195.2" r="2.7" fill="#dcf000" stroke="#8a9a10" stroke-width="0.4"/><circle cx="634.0" cy="203.5" r="2.7" fill="#dcf000" stroke="#8a9a10" stroke-width="0.4"/><circle cx="634.0" cy="211.8" r="2.7" fill="#dcf000" stroke="#8a9a10" stroke-width="0.4"/><circle cx="697.5" cy="248.0" r="2.7" fill="#dcf000" stroke="#8a9a10" stroke-width="0.4"/><circle cx="634.0" cy="253.8" r="2.5" fill="#b7c5d6" stroke="#7f8ea5" stroke-width="0.5"/><circle cx="697.5" cy="290.2" r="2.7" fill="#dcf000" stroke="#8a9a10" stroke-width="0.4"/><circle cx="634.0" cy="295.9" r="2.5" fill="#b7c5d6" stroke="#7f8ea5" stroke-width="0.5"/><circle cx="697.5" cy="341.5" r="2.7" fill="#dcf000" stroke="#8a9a10" stroke-width="0.4"/><circle cx="634.0" cy="338.9" r="2.7" fill="#dcf000" stroke="#8a9a10" stroke-width="0.4"/><circle cx="634.0" cy="347.2" r="2.7" fill="#dcf000" stroke="#8a9a10" stroke-width="0.4"/><circle cx="634.0" cy="355.6" r="2.5" fill="#b7c5d6" stroke="#7f8ea5" stroke-width="0.5"/><circle cx="697.5" cy="396.2" r="2.7" fill="#dcf000" stroke="#8a9a10" stroke-width="0.4"/><circle cx="634.0" cy="397.8" r="2.5" fill="#b7c5d6" stroke="#7f8ea5" stroke-width="0.5"/><circle cx="634.0" cy="406.1" r="2.7" fill="#dcf000" stroke="#8a9a10" stroke-width="0.4"/><circle cx="799.5" cy="222.7" r="2.7" fill="#dcf000" stroke="#8a9a10" stroke-width="0.4"/><circle cx="736.0" cy="220.2" r="2.7" fill="#dcf000" stroke="#8a9a10" stroke-width="0.4"/><circle cx="736.0" cy="228.5" r="2.5" fill="#b7c5d6" stroke="#7f8ea5" stroke-width="0.5"/><circle cx="736.0" cy="236.8" r="2.7" fill="#dcf000" stroke="#8a9a10" stroke-width="0.4"/><circle cx="799.5" cy="294.2" r="2.7" fill="#dcf000" stroke="#8a9a10" stroke-width="0.4"/><circle cx="736.0" cy="295.8" r="2.7" fill="#dcf000" stroke="#8a9a10" stroke-width="0.4"/><circle cx="736.0" cy="304.1" r="2.7" fill="#dcf000" stroke="#8a9a10" stroke-width="0.4"/><circle cx="799.5" cy="349.6" r="2.7" fill="#dcf000" stroke="#8a9a10" stroke-width="0.4"/><circle cx="736.0" cy="347.0" r="2.7" fill="#dcf000" stroke="#8a9a10" stroke-width="0.4"/><circle cx="736.0" cy="355.3" r="2.7" fill="#dcf000" stroke="#8a9a10" stroke-width="0.4"/><circle cx="736.0" cy="363.6" r="2.5" fill="#b7c5d6" stroke="#7f8ea5" stroke-width="0.5"/><circle cx="266.5" cy="320.9" r="2.7" fill="#dcf000" stroke="#8a9a10" stroke-width="0.4"/><circle cx="203.0" cy="322.4" r="2.5" fill="#b7c5d6" stroke="#7f8ea5" stroke-width="0.5"/><circle cx="203.0" cy="330.8" r="2.5" fill="#b7c5d6" stroke="#7f8ea5" stroke-width="0.5"/><circle cx="266.5" cy="370.6" r="2.7" fill="#dcf000" stroke="#8a9a10" stroke-width="0.4"/><circle cx="203.0" cy="372.1" r="2.5" fill="#b7c5d6" stroke="#7f8ea5" stroke-width="0.5"/><circle cx="203.0" cy="380.4" r="2.5" fill="#b7c5d6" stroke="#7f8ea5" stroke-width="0.5"/><circle cx="376.5" cy="341.9" r="2.7" fill="#dcf000" stroke="#8a9a10" stroke-width="0.4"/><circle cx="313.0" cy="339.3" r="2.7" fill="#dcf000" stroke="#8a9a10" stroke-width="0.4"/><circle cx="313.0" cy="347.6" r="2.7" fill="#dcf000" stroke="#8a9a10" stroke-width="0.4"/><circle cx="313.0" cy="355.9" r="2.5" fill="#b7c5d6" stroke="#7f8ea5" stroke-width="0.5"/><circle cx="376.5" cy="392.3" r="2.7" fill="#dcf000" stroke="#8a9a10" stroke-width="0.4"/><circle cx="313.0" cy="398.0" r="2.5" fill="#b7c5d6" stroke="#7f8ea5" stroke-width="0.5"/><circle cx="486.5" cy="349.6" r="2.7" fill="#dcf000" stroke="#8a9a10" stroke-width="0.4"/><circle cx="423.0" cy="347.0" r="2.5" fill="#b7c5d6" stroke="#7f8ea5" stroke-width="0.5"/><circle cx="423.0" cy="355.3" r="2.7" fill="#dcf000" stroke="#8a9a10" stroke-width="0.4"/><circle cx="423.0" cy="363.6" r="2.7" fill="#dcf000" stroke="#8a9a10" stroke-width="0.4"/><circle cx="486.5" cy="434.0" r="2.7" fill="#dcf000" stroke="#8a9a10" stroke-width="0.4"/><circle cx="423.0" cy="439.8" r="2.5" fill="#b7c5d6" stroke="#7f8ea5" stroke-width="0.5"/><circle cx="588.5" cy="349.6" r="2.7" fill="#dcf000" stroke="#8a9a10" stroke-width="0.4"/><circle cx="525.0" cy="347.0" r="2.7" fill="#dcf000" stroke="#8a9a10" stroke-width="0.4"/><circle cx="525.0" cy="355.3" r="2.7" fill="#dcf000" stroke="#8a9a10" stroke-width="0.4"/><circle cx="525.0" cy="363.6" r="2.5" fill="#b7c5d6" stroke="#7f8ea5" stroke-width="0.5"/><circle cx="588.5" cy="421.8" r="2.7" fill="#dcf000" stroke="#8a9a10" stroke-width="0.4"/><circle cx="525.0" cy="423.3" r="2.5" fill="#b7c5d6" stroke="#7f8ea5" stroke-width="0.5"/><circle cx="525.0" cy="431.6" r="2.5" fill="#b7c5d6" stroke="#7f8ea5" stroke-width="0.5"/><circle cx="845.3" cy="212.0" r="2.7" fill="#dcf000" stroke="#8a9a10" stroke-width="0.4"/><circle cx="845.3" cy="220.0" r="2.5" fill="#b7c5d6" stroke="#7f8ea5" stroke-width="0.5"/><circle cx="845.3" cy="228.1" r="2.5" fill="#b7c5d6" stroke="#7f8ea5" stroke-width="0.5"/><circle cx="845.3" cy="236.1" r="2.7" fill="#dcf000" stroke="#8a9a10" stroke-width="0.4"/><circle cx="845.3" cy="244.1" r="2.7" fill="#dcf000" stroke="#8a9a10" stroke-width="0.4"/><circle cx="845.3" cy="252.2" r="2.5" fill="#b7c5d6" stroke="#7f8ea5" stroke-width="0.5"/><circle cx="845.3" cy="260.2" r="2.7" fill="#dcf000" stroke="#8a9a10" stroke-width="0.4"/><circle cx="845.3" cy="268.2" r="2.5" fill="#b7c5d6" stroke="#7f8ea5" stroke-width="0.5"/><circle cx="845.3" cy="276.3" r="2.5" fill="#b7c5d6" stroke="#7f8ea5" stroke-width="0.5"/><circle cx="845.3" cy="284.3" r="2.5" fill="#b7c5d6" stroke="#7f8ea5" stroke-width="0.5"/><circle cx="845.3" cy="292.3" r="2.5" fill="#b7c5d6" stroke="#7f8ea5" stroke-width="0.5"/><circle cx="845.3" cy="300.3" r="2.5" fill="#b7c5d6" stroke="#7f8ea5" stroke-width="0.5"/><circle cx="845.3" cy="308.4" r="2.5" fill="#b7c5d6" stroke="#7f8ea5" stroke-width="0.5"/><circle cx="845.3" cy="316.4" r="2.5" fill="#b7c5d6" stroke="#7f8ea5" stroke-width="0.5"/><circle cx="845.3" cy="324.4" r="2.5" fill="#b7c5d6" stroke="#7f8ea5" stroke-width="0.5"/><circle cx="845.3" cy="332.5" r="2.5" fill="#b7c5d6" stroke="#7f8ea5" stroke-width="0.5"/><circle cx="845.3" cy="340.5" r="2.5" fill="#b7c5d6" stroke="#7f8ea5" stroke-width="0.5"/><circle cx="845.3" cy="348.5" r="2.5" fill="#b7c5d6" stroke="#7f8ea5" stroke-width="0.5"/><circle cx="845.3" cy="356.6" r="2.5" fill="#b7c5d6" stroke="#7f8ea5" stroke-width="0.5"/><circle cx="845.3" cy="364.6" r="2.5" fill="#b7c5d6" stroke="#7f8ea5" stroke-width="0.5"/><circle cx="845.3" cy="372.6" r="2.5" fill="#b7c5d6" stroke="#7f8ea5" stroke-width="0.5"/><circle cx="845.3" cy="380.6" r="2.5" fill="#b7c5d6" stroke="#7f8ea5" stroke-width="0.5"/><circle cx="845.3" cy="388.7" r="2.5" fill="#b7c5d6" stroke="#7f8ea5" stroke-width="0.5"/><circle cx="845.3" cy="396.7" r="2.5" fill="#b7c5d6" stroke="#7f8ea5" stroke-width="0.5"/><circle cx="845.3" cy="404.7" r="2.5" fill="#b7c5d6" stroke="#7f8ea5" stroke-width="0.5"/><circle cx="845.3" cy="412.8" r="2.5" fill="#b7c5d6" stroke="#7f8ea5" stroke-width="0.5"/><circle cx="845.3" cy="420.8" r="2.5" fill="#b7c5d6" stroke="#7f8ea5" stroke-width="0.5"/><circle cx="845.3" cy="428.8" r="2.5" fill="#b7c5d6" stroke="#7f8ea5" stroke-width="0.5"/><circle cx="845.3" cy="436.9" r="2.5" fill="#b7c5d6" stroke="#7f8ea5" stroke-width="0.5"/><circle cx="845.3" cy="444.9" r="2.5" fill="#b7c5d6" stroke="#7f8ea5" stroke-width="0.5"/></svg>
<div class="abs" style="left:191px;top:467px;width:27px;height:28px;border:1px solid #4e4e4e;border-radius:4px;background:#434343"></div>
<div class="abs" style="left:195px;top:471.5px;width:19px;height:19px;border-radius:3px;background:#393939"></div>
<svg class="abs" style="left:195px;top:471px" width="20" height="20"><path d="M5,3.5 L8,3.5 L8.5,5 L9,7 L9,15 L4,15 L3.5,12 Z" fill="#e4e4e4"/><path d="M12,3.5 L15,3.5 L16.5,12 L16,15 L11,15 L11,7 L11.5,5 Z" fill="#e4e4e4"/><circle cx="10" cy="8.5" r="1.6" fill="#fff" stroke="#333" stroke-width="0.6"/><rect x="5.5" y="2.3" width="2.6" height="1.6" fill="#ddd"/><rect x="11.9" y="2.3" width="2.6" height="1.6" fill="#ddd"/></svg>
<div class="abs" style="left:722px;top:54px;width:198px;height:19px;background:#5c5c5c"></div>
<div class="abs" style="left:727.5px;top:58.5px;font-size:11px;color:#e4e4e4">View1</div>
<svg class="abs" style="left:907px;top:61px" width="6" height="4"><polygon points="0,0 6,0 3,4" fill="#fff"/></svg>
<div class="abs" style="left:1px;top:500px;width:922px;height:21px;background:#444;border-radius:0 0 6px 6px"></div>
<div class="abs" style="left:2px;top:501px;width:21px;height:19.5px;background:#5b8ed0;border-radius:3px"></div>
<svg class="abs" style="left:2px;top:501px" width="21" height="20"><path d="M6.5,10 C6.5,8 9,7.5 11.5,7.5 C14,7.5 16.5,8.5 16.5,11 C16.5,14 14.5,16 11.5,16 C8.5,16 7,14 6.5,10 Z" fill="#e4e4e4" stroke="#666" stroke-width="0.6"/><path d="M7,11 L3,8.5 L5,13.5 L8,14" fill="#e4e4e4" stroke="#666" stroke-width="0.5"/><path d="M16.3,9.5 C19.5,9 19.5,13.5 16,14" fill="none" stroke="#e4e4e4" stroke-width="1.2"/><rect x="10" y="6" width="3" height="1.8" fill="#e4e4e4"/></svg>
<div class="abs" style="left:27px;top:505px;font-size:10.1px;color:#fff">Rendering finished</div>
<div class="abs" style="left:732px;top:501.5px;width:53px;height:19px;background:#5a5a5a"></div>
<div class="abs" style="left:737px;top:504px;font-size:11.5px;color:#ddd">42%</div>
<svg class="abs" style="left:773px;top:509px" width="6" height="4"><polygon points="0,0 6,0 3,4" fill="#fff"/></svg>
<svg class="abs" style="left:0;top:497px" width="925" height="28"><path d="M794,17 L794,10 C794,9 795.5,9 795.5,10 L795.5,14 L795.5,7 C795.5,6 797,6 797,7 L797,13.5 L797,6 C797,5 798.5,5 798.5,6 L798.5,13.5 L798.5,7 C798.5,6 800,6 800,7 L800,15 L801,13 C801.5,12 803,12.5 802.5,13.5 L800,20 C799.5,21.5 798.5,22 797,22 L796,22 C795,22 794,20 794,17 Z" fill="#e0e0e0"/><circle cx="821.5" cy="11.5" r="4.8" fill="none" stroke="#e0e0e0" stroke-width="1.6"/><path d="M818,15 L814,19" stroke="#e0e0e0" stroke-width="2.2" stroke-linecap="round"/><rect x="836.5" y="8" width="14" height="13" fill="none" stroke="#ddd" stroke-width="1" stroke-dasharray="2 2"/><circle cx="845" cy="13" r="3" fill="none" stroke="#3cc8c8" stroke-width="1.3"/><path d="M843,15 L840,18" stroke="#3cc8c8" stroke-width="1.6"/><path d="M859.5,11.5 L859.5,8.5 L862.5,8.5 M870.5,8.5 L873.5,8.5 L873.5,11.5 M873.5,19.5 L873.5,22.5 L870.5,22.5 M862.5,22.5 L859.5,22.5 L859.5,19.5" fill="none" stroke="#ddd" stroke-width="1"/><path d="M866.5,10.5 L871,13 L871,18 L866.5,20.5 L862,18 L862,13 Z" fill="#e8e8e8" stroke="#444" stroke-width="0.5"/><path d="M862,13 L866.5,15.5 L871,13 M866.5,15.5 L866.5,20.5" stroke="#555" stroke-width="0.6" fill="none"/><path d="M882,11.5 L882,8.5 L885,8.5 M893,8.5 L896,8.5 L896,11.5 M896,19.5 L896,22.5 L893,22.5 M885,22.5 L882,22.5 L882,19.5" fill="none" stroke="#ddd" stroke-width="1"/><path d="M889,10.5 L893.5,13 L893.5,18 L889,20.5 L884.5,18 L884.5,13 Z" fill="#34c4c8"/><path d="M884.5,13 L889,15.5 L893.5,13 M889,15.5 L889,20.5" stroke="#1e8a90" stroke-width="0.6" fill="none"/><path d="M904.5,11.5 L904.5,8.5 L907.5,8.5 M915.5,8.5 L918.5,8.5 L918.5,11.5 M918.5,19.5 L918.5,22.5 L915.5,22.5 M907.5,22.5 L904.5,22.5 L904.5,19.5" fill="none" stroke="#ddd" stroke-width="1"/><path d="M908,17 L908,11 C908,10 909.3,10 909.3,11 L909.3,14 L909.3,8.5 C909.3,7.5 910.6,7.5 910.6,8.5 L910.6,13.5 L910.6,8 C910.6,7 911.9,7 911.9,8 L911.9,13.5 L911.9,9 C911.9,8 913.2,8 913.2,9 L913.2,15 L914,13.5 C914.5,12.5 916,13 915.5,14 L913.5,19.5 C913,21 912,21.5 910.5,21.5 L910,21.5 C909,21.5 908,20 908,17 Z" fill="#34c4c8"/></svg>
</body></html>
